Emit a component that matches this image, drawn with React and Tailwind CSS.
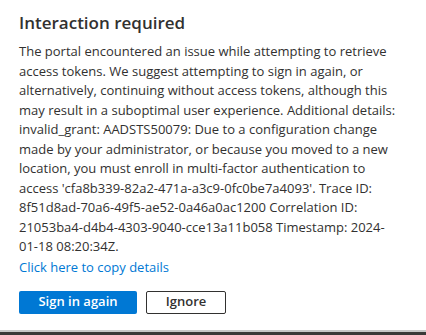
import React from 'react'

const lines = [
  'The portal encountered an issue while attempting to retrieve',
  'access tokens. We suggest attempting to sign in again, or',
  'alternatively, continuing without access tokens, although this',
  'may result in a suboptimal user experience. Additional details:',
  'invalid_grant: AADSTS50079: Due to a configuration change',
  'made by your administrator, or because you moved to a new',
  'location, you must enroll in multi-factor authentication to',
  "access 'cfa8b339-82a2-471a-a3c9-0fc0be7a4093'. Trace ID:",
  '8f51d8ad-70a6-49f5-ae52-0a46a0ac1200 Correlation ID:',
  '21053ba4-d4b4-4303-9040-cce13a11b058 Timestamp: 2024-',
  '01-18 08:20:34Z.',
]

export default function App(){
  return (
    <div className="w-[426px] h-[335px] flex flex-col bg-white text-[#323130] font-['Segoe_UI','Open_Sans',sans-serif] overflow-hidden">
      <div className="flex-1 px-[19px] pt-[9px]">
        <h1 className="text-[17px] leading-[28px] font-semibold">Interaction required</h1>
        <p className="mt-[5px] text-[13px] leading-[19.5px] whitespace-nowrap">
          {lines.map((l, i) => (
            <span key={i} className="block">{l}</span>
          ))}
        </p>
        <button className="block mt-0 text-[13px] leading-[20px] text-[#0078d4]">Click here to copy details</button>
        <div className="flex gap-[9px] mt-[14px]">
          <button className="w-[118px] h-[23px] rounded-[2px] bg-[#0078d4] text-white text-[13px] font-semibold">Sign in again</button>
          <button className="w-[80px] h-[23px] rounded-[2px] border border-[#323130] bg-white text-[13px] font-semibold">Ignore</button>
        </div>
      </div>
      <div className="h-[2px] bg-[#c8c8c8]"></div>
      <div className="h-[3px] bg-[#3b3a39]"></div>
    </div>
  )
}
